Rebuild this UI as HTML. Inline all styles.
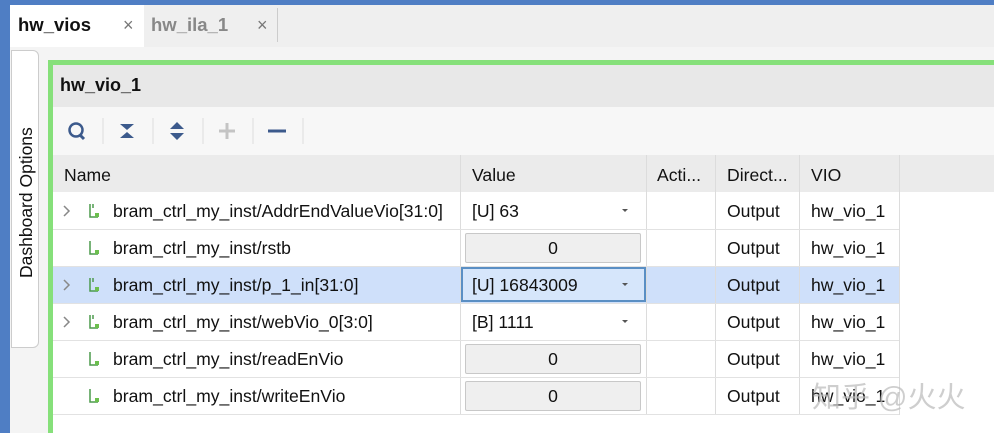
<!DOCTYPE html>
<html style="width:994px;height:433px;overflow:hidden"><head><style>
*{box-sizing:border-box;margin:0;padding:0}
body{width:994px;height:433px;overflow:hidden;background:#f2f2f2;font-family:"Liberation Sans",Arial,sans-serif;position:relative;color:#111}
.abs{position:absolute}
.cell{position:absolute;font-size:17.6px;line-height:37px;white-space:nowrap;margin-top:1px}
</style></head><body>
<div class="abs" style="left:0;top:0;width:994px;height:5px;background:#4f7ec4"></div>
<div class="abs" style="left:0;top:0;width:10px;height:433px;background:#4f7ec4"></div>
<div class="abs" style="left:10px;top:5px;width:984px;height:42px;background:#efefef"></div>
<div class="abs" style="left:10px;top:5px;width:134px;height:42px;background:#fff"></div>
<div class="abs" style="left:18px;top:14px;font-size:18.5px;font-weight:bold">hw_vios</div>
<div class="abs" style="left:123px;top:15px;font-size:18px;color:#777">×</div>
<div class="abs" style="left:151px;top:14px;font-size:18.5px;font-weight:bold;color:#888">hw_ila_1</div>
<div class="abs" style="left:257px;top:15px;font-size:18px;color:#777">×</div>
<div class="abs" style="left:277px;top:8px;width:1px;height:34px;background:#ccc"></div>
<div class="abs" style="left:10px;top:47px;width:984px;height:386px;background:#f4f4f4"></div>
<div class="abs" style="left:11px;top:50px;width:28px;height:298px;background:#fff;border:1px solid #ccc;border-radius:0 6px 6px 0"></div>
<div class="abs" style="left:16px;top:278px;transform:rotate(-90deg);transform-origin:0 0;font-size:17.5px;white-space:nowrap;width:170px;line-height:20px">Dashboard Options</div>
<div class="abs" style="left:48px;top:60px;width:946px;height:373px;border-left:5px solid #86e07a;border-top:5px solid #86e07a;background:#fff"></div>
<div class="abs" style="left:53px;top:65px;width:941px;height:42px;background:#e8e8e8"></div>
<div class="abs" style="left:60px;top:75px;font-size:18px;font-weight:bold">hw_vio_1</div>
<div class="abs" style="left:53px;top:107px;width:941px;height:48px;background:#f7f7f7"></div>
<svg class="abs" style="left:53px;top:107px" width="260" height="48">
<circle cx="23" cy="23" r="6.5" fill="none" stroke="#3c5a8c" stroke-width="2.5"/><line x1="27" y1="28" x2="31" y2="32" stroke="#3c5a8c" stroke-width="3"/>
<line x1="50" y1="11" x2="50" y2="37" stroke="#ddd"/>
<path d="M67 17h14l-7 6z M67 31h14l-7-6z" fill="#3c5a8c"/>
<line x1="100" y1="11" x2="100" y2="37" stroke="#ddd"/>
<path d="M117 22h14l-7-7z M117 26h14l-7 7z" fill="#3c5a8c"/>
<line x1="150" y1="11" x2="150" y2="37" stroke="#ddd"/>
<path d="M166 24h16M174 16v16" stroke="#c4c4c4" stroke-width="3"/>
<line x1="200" y1="11" x2="200" y2="37" stroke="#ddd"/>
<path d="M215 24h18" stroke="#3c5a8c" stroke-width="3"/>
<line x1="250" y1="11" x2="250" y2="37" stroke="#ddd"/>
</svg>
<div class="abs" style="left:53px;top:155px;width:941px;height:37px;background:#ebebeb"></div>
<div class="abs" style="left:53px;top:266px;width:846px;height:37px;background:#cfe0fa"></div>
<div class="cell" style="left:64px;top:156px">Name</div>
<div class="cell" style="left:472px;top:156px">Value</div>
<div class="cell" style="left:657px;top:156px">Acti...</div>
<div class="cell" style="left:727px;top:156px">Direct...</div>
<div class="cell" style="left:811px;top:156px">VIO</div>
<div class="abs" style="left:460px;top:155px;width:1px;height:260px;background:#dcdcdc"></div>
<div class="abs" style="left:646px;top:155px;width:1px;height:260px;background:#dcdcdc"></div>
<div class="abs" style="left:715px;top:155px;width:1px;height:260px;background:#dcdcdc"></div>
<div class="abs" style="left:799px;top:155px;width:1px;height:260px;background:#dcdcdc"></div>
<div class="abs" style="left:899px;top:155px;width:1px;height:260px;background:#dcdcdc"></div>
<div class="abs" style="left:53px;top:229px;width:846px;height:1px;background:#e2e2e2"></div>
<div class="abs" style="left:53px;top:266px;width:846px;height:1px;background:#e2e2e2"></div>
<div class="abs" style="left:53px;top:303px;width:846px;height:1px;background:#e2e2e2"></div>
<div class="abs" style="left:53px;top:340px;width:846px;height:1px;background:#e2e2e2"></div>
<div class="abs" style="left:53px;top:377px;width:846px;height:1px;background:#e2e2e2"></div>
<div class="abs" style="left:53px;top:414px;width:846px;height:1px;background:#e2e2e2"></div>
<svg class="abs" style="left:53px;top:192px" width="60" height="222">
<g fill="none" stroke="#888" stroke-width="1.5"><path d="M11 14l5 5-5 5"/><path d="M11 88l5 5-5 5"/><path d="M11 125l5 5-5 5"/></g>
<g stroke="#4c9a4c" stroke-width="1.5" fill="none">
<path d="M37 12v13h8"/><path d="M37 49v13h8"/><path d="M37 86v13h8"/><path d="M37 123v13h8"/><path d="M37 160v13h8"/><path d="M37 197v13h8"/>
<path d="M40 12v4"/><path d="M40 86v4"/><path d="M40 123v4"/>
</g>
<g fill="#6cbf4e"><rect x="42" y="21" width="4" height="4"/><rect x="42" y="58" width="4" height="4"/><rect x="42" y="95" width="4" height="4"/><rect x="42" y="132" width="4" height="4"/><rect x="42" y="169" width="4" height="4"/><rect x="42" y="206" width="4" height="4"/></g>
</svg>
<div class="cell" style="left:113px;top:192px">bram_ctrl_my_inst/AddrEndValueVio[31:0]</div>
<div class="cell" style="left:113px;top:229px">bram_ctrl_my_inst/rstb</div>
<div class="cell" style="left:113px;top:266px">bram_ctrl_my_inst/p_1_in[31:0]</div>
<div class="cell" style="left:113px;top:303px">bram_ctrl_my_inst/webVio_0[3:0]</div>
<div class="cell" style="left:113px;top:340px">bram_ctrl_my_inst/readEnVio</div>
<div class="cell" style="left:113px;top:377px">bram_ctrl_my_inst/writeEnVio</div>
<div class="cell" style="left:472px;top:192px">[U] 63</div>
<div class="abs" style="left:622px;top:209px;border:3px solid transparent;border-top:3px solid #555"></div>
<div class="abs" style="left:465px;top:233px;width:176px;height:30px;background:#efefef;border:1px solid #c8c8c8;border-radius:2px;text-align:center;font-size:17.6px;line-height:29px">0</div>
<div class="abs" style="left:461px;top:267px;width:185px;height:35px;background:#d6e6fb;border:2px solid #5a8fc4"></div>
<div class="cell" style="left:472px;top:266px">[U] 16843009</div>
<div class="abs" style="left:622px;top:283px;border:3px solid transparent;border-top:3px solid #555"></div>
<div class="cell" style="left:472px;top:303px">[B] 1111</div>
<div class="abs" style="left:622px;top:320px;border:3px solid transparent;border-top:3px solid #555"></div>
<div class="abs" style="left:465px;top:344px;width:176px;height:30px;background:#efefef;border:1px solid #c8c8c8;border-radius:2px;text-align:center;font-size:17.6px;line-height:29px">0</div>
<div class="abs" style="left:465px;top:381px;width:176px;height:30px;background:#efefef;border:1px solid #c8c8c8;border-radius:2px;text-align:center;font-size:17.6px;line-height:29px">0</div>
<div class="cell" style="left:727px;top:192px">Output</div>
<div class="cell" style="left:727px;top:229px">Output</div>
<div class="cell" style="left:727px;top:266px">Output</div>
<div class="cell" style="left:727px;top:303px">Output</div>
<div class="cell" style="left:727px;top:340px">Output</div>
<div class="cell" style="left:727px;top:377px">Output</div>
<div class="cell" style="left:811px;top:192px">hw_vio_1</div>
<div class="cell" style="left:811px;top:229px">hw_vio_1</div>
<div class="cell" style="left:811px;top:266px">hw_vio_1</div>
<div class="cell" style="left:811px;top:303px">hw_vio_1</div>
<div class="cell" style="left:811px;top:340px">hw_vio_1</div>
<div class="cell" style="left:811px;top:377px">hw_vio_1</div>
<div class="abs" style="left:812px;top:374px;font-size:29px;color:rgba(190,190,190,0.75);font-family:'Liberation Sans','Noto Sans CJK SC',sans-serif;white-space:nowrap">知乎 @火火</div>
</body></html>
